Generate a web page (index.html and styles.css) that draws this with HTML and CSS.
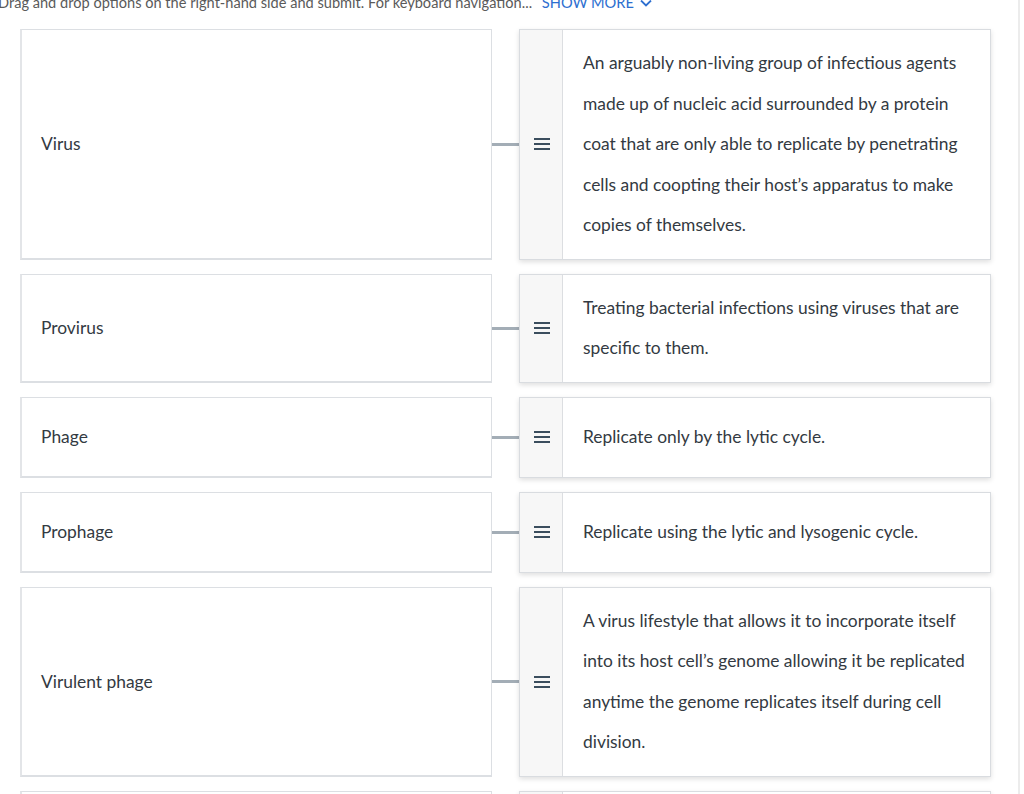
FILE: index.html
```html
<!DOCTYPE html>
<html>
<head>
<meta charset="utf-8">
<link rel="stylesheet" href="styles.css">
</head>
<body>
<div class="page">
  <div class="intro">Drag and drop options on the right-hand side and submit. For keyboard navigation... <span class="more">SHOW MORE <svg class="chev" width="12" height="8" viewBox="0 0 12 8"><path d="M1 1.5 L6 6.5 L11 1.5" fill="none" stroke="#2d6fd0" stroke-width="1.8"/></svg></span></div>

  <div class="pairs">
    <div class="pair">
      <div class="term">Virus</div>
      <div class="link"></div>
      <div class="card">
        <div class="handle"><svg width="16" height="12" viewBox="0 0 16 12"><rect y="0" width="16" height="2"/><rect y="5" width="16" height="2"/><rect y="10" width="16" height="2"/></svg></div>
        <div class="def">An arguably non-living group of infectious agents made up of nucleic acid surrounded by a protein coat that are only able to replicate by penetrating cells and coopting their host’s apparatus to make copies of themselves.</div>
      </div>
    </div>

    <div class="pair">
      <div class="term">Provirus</div>
      <div class="link"></div>
      <div class="card">
        <div class="handle"><svg width="16" height="12" viewBox="0 0 16 12"><rect y="0" width="16" height="2"/><rect y="5" width="16" height="2"/><rect y="10" width="16" height="2"/></svg></div>
        <div class="def">Treating bacterial infections using viruses that are specific to them.</div>
      </div>
    </div>

    <div class="pair">
      <div class="term">Phage</div>
      <div class="link"></div>
      <div class="card">
        <div class="handle"><svg width="16" height="12" viewBox="0 0 16 12"><rect y="0" width="16" height="2"/><rect y="5" width="16" height="2"/><rect y="10" width="16" height="2"/></svg></div>
        <div class="def">Replicate only by the lytic cycle.</div>
      </div>
    </div>

    <div class="pair">
      <div class="term">Prophage</div>
      <div class="link"></div>
      <div class="card">
        <div class="handle"><svg width="16" height="12" viewBox="0 0 16 12"><rect y="0" width="16" height="2"/><rect y="5" width="16" height="2"/><rect y="10" width="16" height="2"/></svg></div>
        <div class="def">Replicate using the lytic and lysogenic cycle.</div>
      </div>
    </div>

    <div class="pair">
      <div class="term">Virulent phage</div>
      <div class="link"></div>
      <div class="card">
        <div class="handle"><svg width="16" height="12" viewBox="0 0 16 12"><rect y="0" width="16" height="2"/><rect y="5" width="16" height="2"/><rect y="10" width="16" height="2"/></svg></div>
        <div class="def">A virus lifestyle that allows it to incorporate itself into its host cell’s genome allowing it be replicated anytime the genome replicates itself during cell division.</div>
      </div>
    </div>

    <div class="pair">
      <div class="term"></div>
      <div class="link"></div>
      <div class="card">
        <div class="handle"></div>
        <div class="def"></div>
      </div>
    </div>
  </div>
</div>
</body>
</html>
```

FILE: styles.css
```css
html, body {
  margin: 0;
  padding: 0;
  background: #ffffff;
}

body {
  font-family: Lato, "Open Sans", sans-serif;
  color: #333a42;
  overflow: hidden;
}

.page {
  width: 1020px;
  min-height: 794px;
  border-right: 2px solid #ececec;
  box-sizing: border-box;
}

.intro {
  margin-top: -7px;
  margin-left: -2px;
  height: 36px;
  font-size: 14.6px;
  line-height: 20px;
  color: #5a5a5a;
  white-space: nowrap;
}

.more {
  color: #2d6fd0;
  margin-left: 6px;
}

.chev {
  vertical-align: 1px;
  margin-left: 2px;
}

.pairs {
  display: flex;
  flex-direction: column;
  gap: 14px;
  padding-left: 20px;
}

.pair {
  display: flex;
  align-items: stretch;
}

.term {
  width: 472px;
  box-sizing: border-box;
  border: 1px solid #dcdfe3;
  border-left: 2px solid #e3e5e8;
  border-bottom: 2px solid #dcdfe3;
  display: flex;
  align-items: center;
  padding-left: 19px;
  font-size: 17.4px;
}

.link {
  width: 27px;
  display: flex;
  align-items: center;
}

.link::before {
  content: "";
  display: block;
  width: 100%;
  height: 3px;
  background: #a3adb6;
}

.card {
  width: 472px;
  box-sizing: border-box;
  border: 1px solid #d9dce0;
  box-shadow: 0 2px 5px rgba(0, 0, 0, 0.13);
  display: flex;
  min-height: 81px;
  background: #ffffff;
}

.handle {
  width: 42px;
  flex: none;
  background: #f7f7f7;
  border-right: 1px solid #dcdee1;
  display: flex;
  align-items: center;
  justify-content: center;
}

.handle svg {
  fill: #3b4e5e;
  margin-left: 1px;
}

.def {
  flex: 1;
  display: flex;
  align-items: center;
  padding: 13px 20px 13px 20px;
  font-size: 17.4px;
  line-height: 40.5px;
}
```
